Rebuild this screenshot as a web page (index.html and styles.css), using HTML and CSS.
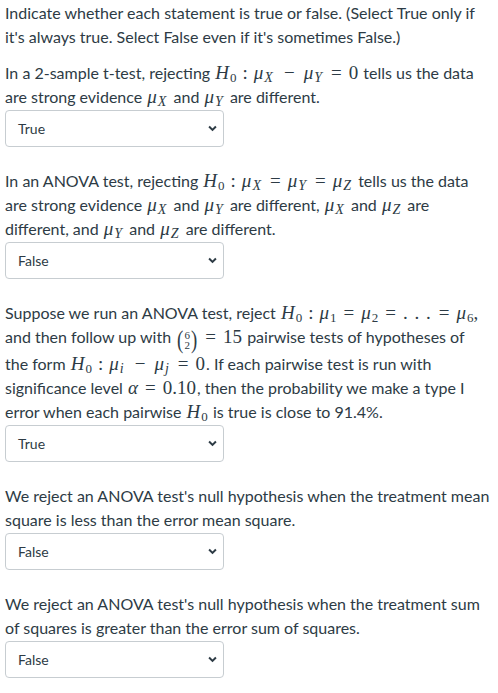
FILE: index.html
```html
<!DOCTYPE html>
<html>
<head>
<meta charset="utf-8">
<link rel="stylesheet" href="styles.css">
</head>
<body>
<div class="quiz">
  <p class="intro">Indicate whether each statement is true or false. (Select True only if it's always true. Select False even if it's sometimes False.)</p>

  <div class="item">
    <p>In a 2-sample t-test, rejecting <span class="m"><i>H</i><sub>0</sub><span class="col">:</span><i>μ</i><sub><i>X</i></sub><span class="bin">−</span><i>μ</i><sub><i>Y</i></sub><span class="rel">=</span>0</span> tells us the data are strong evidence <span class="m"><i>μ</i><sub><i>X</i></sub></span> and <span class="m"><i>μ</i><sub><i>Y</i></sub></span> are different.</p>
    <div class="select"><span>True</span><svg class="chev" viewBox="0 0 10 7" width="9" height="7"><path d="M1.2 1.2 L5 5 L8.8 1.2" fill="none" stroke="#2d3b45" stroke-width="2.2"/></svg></div>
  </div>

  <div class="item">
    <p>In an ANOVA test, rejecting <span class="m"><i>H</i><sub>0</sub><span class="col">:</span><i>μ</i><sub><i>X</i></sub><span class="rel">=</span><i>μ</i><sub><i>Y</i></sub><span class="rel">=</span><i>μ</i><sub><i>Z</i></sub></span> tells us the data are strong evidence <span class="m"><i>μ</i><sub><i>X</i></sub></span> and <span class="m"><i>μ</i><sub><i>Y</i></sub></span> are different, <span class="m"><i>μ</i><sub><i>X</i></sub></span> and <span class="m"><i>μ</i><sub><i>Z</i></sub></span> are different, and <span class="m"><i>μ</i><sub><i>Y</i></sub></span> and <span class="m"><i>μ</i><sub><i>Z</i></sub></span> are different.</p>
    <div class="select"><span>False</span><svg class="chev" viewBox="0 0 10 7" width="9" height="7"><path d="M1.2 1.2 L5 5 L8.8 1.2" fill="none" stroke="#2d3b45" stroke-width="2.2"/></svg></div>
  </div>

  <div class="item">
    <p>Suppose we run an ANOVA test, reject <span class="m"><i>H</i><sub>0</sub><span class="col">:</span><i>μ</i><sub>1</sub><span class="rel">=</span><i>μ</i><sub>2</sub><span class="rel">=</span><span class="dots">. . .</span><span class="rel">=</span><i>μ</i><sub>6</sub>,</span> and then follow up with <span class="m"><span class="binom"><span class="paren">(</span><span class="stack"><span>6</span><span>2</span></span><span class="paren">)</span></span><span class="rel">=</span>15</span> pairwise tests of hypotheses of the form <span class="m"><i>H</i><sub>0</sub><span class="col">:</span><i>μ</i><sub><i>i</i></sub><span class="bin">−</span><i>μ</i><sub><i>j</i></sub><span class="rel">=</span>0</span>. If each pairwise test is run with significance level <span class="m"><i>α</i><span class="rel">=</span>0.10</span>, then the probability we make a type I error when each pairwise <span class="m"><i>H</i><sub>0</sub></span> is true is close to 91.4%.</p>
    <div class="select"><span>True</span><svg class="chev" viewBox="0 0 10 7" width="9" height="7"><path d="M1.2 1.2 L5 5 L8.8 1.2" fill="none" stroke="#2d3b45" stroke-width="2.2"/></svg></div>
  </div>

  <div class="item">
    <p>We reject an ANOVA test's null hypothesis when the treatment mean square is less than the error mean square.</p>
    <div class="select"><span>False</span><svg class="chev" viewBox="0 0 10 7" width="9" height="7"><path d="M1.2 1.2 L5 5 L8.8 1.2" fill="none" stroke="#2d3b45" stroke-width="2.2"/></svg></div>
  </div>

  <div class="item">
    <p>We reject an ANOVA test's null hypothesis when the treatment sum of squares is greater than the error sum of squares.</p>
    <div class="select"><span>False</span><svg class="chev" viewBox="0 0 10 7" width="9" height="7"><path d="M1.2 1.2 L5 5 L8.8 1.2" fill="none" stroke="#2d3b45" stroke-width="2.2"/></svg></div>
  </div>
</div>
</body>
</html>
```

FILE: styles.css
```css
html, body {
  margin: 0;
  padding: 0;
  background: #ffffff;
}
body {
  font-family: Lato, "Liberation Sans", sans-serif;
  font-size: 16px;
  line-height: 24px;
  color: #2d3b45;
}
.quiz {
  padding: 1px 5px 0 5px;
  width: 485px;
}
p {
  margin: 0;
}
.intro {
  margin-bottom: 12px;
}
.item {
  margin-bottom: 22px;
}
.item p {
  margin-bottom: 1px;
}
.m {
  font-family: "Liberation Serif", "DejaVu Serif", serif;
  font-size: 19px;
  white-space: nowrap;
  line-height: 20px;
  margin: 0 1px;
}
.m i {
  font-style: italic;
}
.m sub {
  font-size: 13px;
  vertical-align: -3px;
  line-height: 0;
  margin-left: 1px;
}
.m sub i {
  font-size: 14px;
  padding-right: 2px;
}
.rel {
  padding: 0 7px;
}
.col {
  padding: 0 6px;
}
.bin {
  padding: 0 9px;
}
.dots {
  letter-spacing: 1px;
}
.binom {
  display: inline-flex;
  align-items: center;
  vertical-align: -5px;
}
.paren {
  font-size: 25px;
  line-height: 24px;
  transform: scaleX(0.75);
}
.stack {
  display: inline-flex;
  flex-direction: column;
  font-size: 11px;
  line-height: 10px;
}
.select {
  width: 219px;
  height: 37px;
  box-sizing: border-box;
  border: 1px solid #c7cdd1;
  border-radius: 4px;
  display: flex;
  align-items: center;
  justify-content: space-between;
  padding: 0 6px 0 12px;
  font-size: 14px;
  color: #2d3b45;
  background: #fff;
}
.chev {
  display: block;
}
```
